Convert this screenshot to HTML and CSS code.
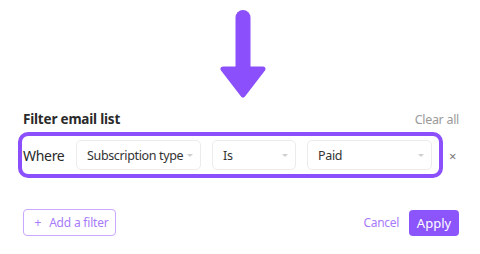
FILE: index.html
```html
<!DOCTYPE html>
<html>
<head>
<meta charset="utf-8">
<link rel="stylesheet" href="styles.css">
</head>
<body>
<div class="page">
  <div class="arrow-wrap">
    <svg class="arrow" width="48" height="90" viewBox="0 0 48 90">
      <rect x="16.5" y="1" width="15" height="64" rx="7.5" fill="#8b50fb"/>
      <polygon points="4,60 44,60 24,86" fill="#8b50fb" stroke="#8b50fb" stroke-width="5" stroke-linejoin="round"/>
    </svg>
  </div>
  <div class="header">
    <div class="title">Filter email list</div>
    <div class="clear">Clear all</div>
  </div>
  <div class="filter-row">
    <div class="filter-box">
      <span class="where">Where</span>
      <div class="select wide"><span>Subscription type</span><i class="caret"></i></div>
      <div class="select narrow"><span>Is</span><i class="caret"></i></div>
      <div class="select wide"><span>Paid</span><i class="caret"></i></div>
    </div>
    <span class="remove">×</span>
  </div>
  <div class="footer">
    <button class="add"><span class="plus">+</span>Add a filter</button>
    <div class="actions">
      <span class="cancel">Cancel</span>
      <button class="apply">Apply</button>
    </div>
  </div>
</div>
</body>
</html>
```
FILE: styles.css
```css
* { box-sizing: border-box; }
html, body { margin: 0; padding: 0; background: #fff; }
body { font-family: "Noto Sans", "Open Sans", sans-serif; color: #333; }
.page { width: 480px; height: 254px; padding: 9px 21px 0 18px; }
.arrow-wrap { display: flex; justify-content: center; padding-left: 9px; height: 90px; }
.arrow { display: block; }
.header { display: flex; justify-content: space-between; align-items: center; margin-top: 10px; height: 20px; padding-left: 5px; }
.title { font-weight: 700; font-size: 13.5px; letter-spacing: -0.2px; color: #2a2a2a; }
.clear { font-size: 12.5px; letter-spacing: -0.3px; color: #9a9a9a; }
.filter-row { display: flex; align-items: center; margin-top: 3px; gap: 6px; }
.filter-box { display: flex; align-items: center; width: 425px; height: 46px; border: 4px solid #8b50fb; border-radius: 10px; padding: 0 7px 0 1px; }
.where { font-size: 14px; letter-spacing: -0.3px; color: #2a2a2a; width: 53px; }
.select { position: relative; height: 30px; border: 1px solid #ececec; border-radius: 5px; display: flex; align-items: center; padding-left: 10px; font-size: 12.5px; letter-spacing: -0.35px; color: #333; margin-right: 11px; }
.select:last-child { margin-right: 0; }
.wide { width: 125px; }
.narrow { width: 84px; }
.caret { position: absolute; right: 7px; top: 13px; width: 0; height: 0; border-left: 3px solid transparent; border-right: 3px solid transparent; border-top: 3px solid #cfcfcf; }
.remove { font-size: 13px; color: #777; margin-top: 2px; }
.footer { display: flex; justify-content: space-between; align-items: center; margin-top: 31px; padding-left: 5px; }
.add { font-family: inherit; font-size: 12px; letter-spacing: -0.2px; color: #a77bfb; background: #fff; border: 1px solid #c9a8fd; border-radius: 4px; height: 27px; width: 93px; padding: 0 0 0 4px; display: flex; align-items: center; justify-content: center; }
.plus { margin-right: 8px; }
.actions { display: flex; align-items: center; gap: 10px; }
.cancel { font-size: 12px; letter-spacing: -0.3px; color: #a77bfb; }
.apply { font-family: inherit; font-size: 13px; color: #fff; background: #8b55fb; border: none; border-radius: 4px; height: 26px; width: 50px; padding: 0; }
```
